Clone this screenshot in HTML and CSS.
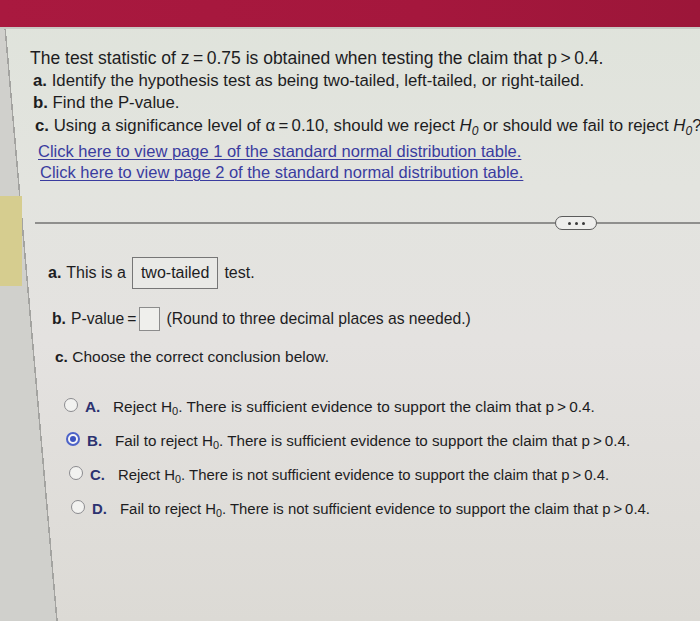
FILE: index.html
```html
<!DOCTYPE html>
<html lang="en">
<head>
<meta charset="utf-8">
<title>Hypothesis test</title>
<link rel="stylesheet" href="styles.css">
</head>
<body>
<div class="page">
  <div class="topbar"></div>
  <div class="content">
    <div class="question">
      <p class="q-line">The test statistic of z&#8201;=&#8201;0.75 is obtained when testing the claim that p&#8201;&gt;&#8201;0.4.</p>
      <p class="q-line sub-line"><b>a.</b> Identify the hypothesis test as being two-tailed, left-tailed, or right-tailed.</p>
      <p class="q-line sub-line"><b>b.</b> Find the P-value.</p>
      <p class="q-line sub-line c-line"><b>c.</b> Using a significance level of &#945;&#8201;=&#8201;0.10, should we reject <i>H</i><sub><i>0</i></sub> or should we fail to reject <i>H</i><sub><i>0</i></sub>?</p>
    </div>
    <div class="links">
      <a class="link link-1" href="#">Click here to view page 1 of the standard normal distribution table.</a>
      <a class="link link-2" href="#">Click here to view page 2 of the standard normal distribution table.</a>
    </div>
    <div class="divider">
      <span class="rule rule-left"></span>
      <span class="pill"><span class="dot"></span><span class="dot"></span><span class="dot"></span></span>
      <span class="rule rule-right"></span>
    </div>
    <div class="answers">
      <div class="row row-a"><b>a.</b><span class="gap"></span>This is a<span class="answer-box">two-tailed</span>test.</div>
      <div class="row row-b"><b>b.</b><span class="gap"></span>P-value&#8201;=<span class="input-box"></span>(Round to three decimal places as needed.)</div>
      <p class="row row-c"><b>c.</b> Choose the correct conclusion below.</p>
      <ul class="options">
        <li class="option"><span class="radio"></span><span class="letter">A.</span><span class="opt-text">Reject H<sub>0</sub>. There is sufficient evidence to support the claim that p&#8201;&gt;&#8201;0.4.</span></li>
        <li class="option"><span class="radio checked"></span><span class="letter">B.</span><span class="opt-text">Fail to reject H<sub>0</sub>. There is sufficient evidence to support the claim that p&#8201;&gt;&#8201;0.4.</span></li>
        <li class="option"><span class="radio"></span><span class="letter">C.</span><span class="opt-text">Reject H<sub>0</sub>. There is not sufficient evidence to support the claim that p&#8201;&gt;&#8201;0.4.</span></li>
        <li class="option"><span class="radio"></span><span class="letter">D.</span><span class="opt-text">Fail to reject H<sub>0</sub>. There is not sufficient evidence to support the claim that p&#8201;&gt;&#8201;0.4.</span></li>
      </ul>
    </div>
  </div>
</div>
</body>
</html>
```
FILE: styles.css
```css
html, body {
  margin: 0;
  padding: 0;
  background: #dedcd7;
}

body {
  width: 700px;
  height: 621px;
  overflow: hidden;
  font-family: "Liberation Sans", Arial, Helvetica, sans-serif;
  color: #1d1d1f;
}

.page {
  width: 700px;
  height: 621px;
  overflow: hidden;
  background:
    linear-gradient(#d6cd8f, #d6cd8f) 0 196px / 22px 90px no-repeat,
    linear-gradient(85deg, #d0d0cc 0, #d0d0cc 56px, #a3a3a0 56px, #a3a3a0 57.5px, rgba(0,0,0,0) 57.5px),
    linear-gradient(180deg, #dfe3db 0%, #e3e4df 30%, #e4e2e0 55%, #dcdad5 100%);
}

.topbar {
  height: 27px;
  background: linear-gradient(90deg, #a9193f 0%, #a5173d 60%, #9c1639 100%);
  border-bottom: 2px solid #c9c9c4;
}

.content {
  padding: 18px 0 0 30px;
}

.question .q-line {
  margin: 0;
  font-size: 17.5px;
  line-height: 22.5px;
  white-space: nowrap;
}

.question .sub-line {
  padding-left: 3px;
  font-size: 16.8px;
}

.question .c-line {
  padding-left: 5px;
}

sub {
  font-size: 0.72em;
  vertical-align: -0.3em;
  line-height: 0;
}

.links {
  margin-top: 4px;
  padding-left: 8px;
}

.link {
  display: block;
  font-size: 16.5px;
  line-height: 21px;
  color: #3a3c9f;
  text-decoration: underline;
  text-decoration-thickness: 1px;
  text-underline-offset: 2px;
  white-space: nowrap;
}

.link-2 {
  padding-left: 2px;
}

.divider {
  display: flex;
  align-items: center;
  height: 14px;
  margin: 33px 0 0 5px;
}

.rule {
  height: 2px;
  background: #8f8f8d;
}

.rule-left {
  flex: 0 0 520px;
}

.rule-right {
  flex: 1 1 auto;
}

.pill {
  box-sizing: border-box;
  width: 42px;
  height: 14px;
  border: 1.5px solid #5b5b5b;
  border-radius: 7px;
  background: #eeeeec;
  display: flex;
  align-items: center;
  justify-content: center;
  gap: 4px;
}

.dot {
  width: 3px;
  height: 3px;
  border-radius: 50%;
  background: #3a3a3a;
}

.answers {
  padding-left: 18px;
  font-size: 16px;
}

.row {
  display: flex;
  align-items: center;
  margin: 0;
  white-space: nowrap;
}

.gap {
  display: inline-block;
  width: 5px;
}

.row-a {
  margin-top: 27px;
  height: 32px;
}

.answer-box {
  box-sizing: border-box;
  height: 32px;
  line-height: 30px;
  padding: 0 8px;
  margin: 0 6px 0 6px;
  border: 1px solid #767676;
  background: #e9e9e6;
}

.row-b {
  margin-top: 18px;
  height: 24px;
  padding-left: 4px;
  font-size: 15.7px;
}

.input-box {
  box-sizing: border-box;
  width: 21px;
  height: 24px;
  margin: 0 6px 0 3px;
  border: 1px solid #8c8c8c;
  background: #efefec;
}

.row-c {
  display: block;
  margin-top: 16px;
  line-height: 20px;
  padding-left: 7px;
  font-size: 15.5px;
}

.options {
  list-style: none;
  margin: 30px 0 0 0;
  padding: 0;
  font-size: 15.3px;
}

.option {
  display: flex;
  align-items: center;
  height: 20px;
  line-height: 20px;
  margin-bottom: 14px;
  white-space: nowrap;
}

.option:nth-child(1) { margin-left: 16px; font-size: 15.4px; }
.option:nth-child(2) { margin-left: 18px; font-size: 15.2px; }
.option:nth-child(3) { margin-left: 21px; font-size: 14.9px; }
.option:nth-child(4) { margin-left: 23px; font-size: 14.9px; }

.radio {
  box-sizing: border-box;
  flex: 0 0 14px;
  width: 14px;
  height: 14px;
  margin-bottom: 5px;
  border-radius: 50%;
  border: 1.5px solid #8b8b8f;
  background: #f2f2f0;
  display: flex;
  align-items: center;
  justify-content: center;
}

.radio.checked {
  border: 2px solid #4d63c8;
  background: #f4f4f6;
}

.radio.checked::after {
  content: "";
  width: 6px;
  height: 6px;
  border-radius: 50%;
  background: #3c53bf;
}

.letter {
  flex: 0 0 28px;
  margin-left: 7px;
  font-weight: bold;
  color: #2c3270;
}

.opt-text {
  color: #1d1d1f;
}
```
